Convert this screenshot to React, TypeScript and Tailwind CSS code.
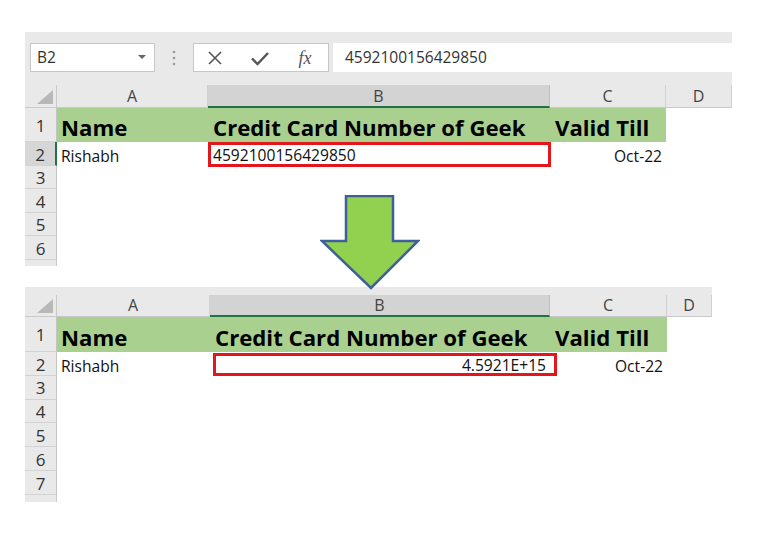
import React from 'react';

const FONT = "font-['Open_Sans',_'Liberation_Sans',_sans-serif]";

type SheetProps = {
  colWidths: number[];
  headerH: number;
  row1H: number;
  rowH: number;
  fullRows: number;
  partialH: number;
  value: string;
  alignRight: boolean;
  selected: boolean;
  boxShift?: boolean;
};

function Sheet({ colWidths, headerH, row1H, rowH, fullRows, partialH, value, alignRight, selected, boxShift }: SheetProps) {
  const [rw, aw, bw, cw, dw] = colWidths;
  const letters = ['A', 'B', 'C', 'D'];
  const widths = [aw, bw, cw, dw];
  const rows = Array.from({ length: fullRows - 2 }, (_, i) => i + 3);

  return (
    <div className="flex flex-col">
      {/* column headers */}
      <div className="flex" style={{ height: headerH }}>
        <div className="relative bg-[#e9e9e9] border-r border-b border-[#c9c9c9]" style={{ width: rw }}>
          <svg className="absolute right-[3px] bottom-[3px]" width="16" height="14" viewBox="0 0 16 14">
            <polygon points="16,0 16,14 0,14" fill="#b8b8b8" />
          </svg>
        </div>
        {letters.map((l, i) => (
          <div
            key={l}
            className={`flex items-center justify-center text-[16px] text-[#444] border-r ${
              l === 'B'
                ? 'bg-[#d3d3d3] border-b-2 border-b-[#217346] border-r-[#bdbdbd]'
                : 'bg-[#e9e9e9] border-b border-b-[#c9c9c9] border-r-[#d0d0d0]'
            }`}
            style={{ width: widths[i] }}
          >
            {l}
          </div>
        ))}
      </div>

      {/* row 1 */}
      <div className="flex" style={{ height: row1H }}>
        <RowHead n={1} w={rw} />
        <div className="flex bg-[#a9d08e] font-bold text-[22.2px] text-black leading-none">
          <div className="flex items-end pb-[3px] pl-[4px]" style={{ width: aw }}>Name</div>
          <div className="flex items-end pb-[3px] pl-[5px] whitespace-nowrap" style={{ width: bw }}>
            Credit Card Number of Geek
          </div>
          <div className="flex items-end pb-[3px] pl-[5px] whitespace-nowrap" style={{ width: cw }}>
            Valid Till
          </div>
        </div>
      </div>

      {/* row 2 */}
      <div className="flex text-[15.6px] text-[#111]" style={{ height: rowH }}>
        <RowHead n={2} w={rw} active={selected} />
        <div className="flex items-end pl-[4px] leading-[20px]" style={{ width: aw }}>Rishabh</div>
        <div className="relative" style={{ width: bw }}>
          <div
            className={`absolute border-[3px] border-[#e3161b] flex items-center pt-[2px] ${
              alignRight ? 'justify-end pr-[8px]' : 'justify-start pl-[2px]'
            } ${boxShift ? 'left-[3px] -right-[7px] top-[1px] bottom-0' : 'left-0 -right-[1px] top-0 bottom-[-1px]'}`}
          >
            {value}
          </div>
        </div>
        <div className="flex items-end justify-end pr-[4px] leading-[20px]" style={{ width: cw }}>Oct-22</div>
      </div>

      {rows.map((n) => (
        <div key={n} className="flex" style={{ height: rowH }}>
          <RowHead n={n} w={rw} />
        </div>
      ))}
      <div className="flex" style={{ height: partialH }}>
        <div className="bg-[#e9e9e9] border-r border-[#c9c9c9]" style={{ width: rw }} />
      </div>
    </div>
  );
}

function RowHead({ n, w, active }: { n: number; w: number; active?: boolean }) {
  return (
    <div
      className={`flex items-center justify-center pt-[2px] text-[17px] text-[#333] border-b border-b-[#d3d3d3] ${
        active ? 'bg-[#d6d6d6] border-r-2 border-r-[#217346]' : 'bg-[#e9e9e9] border-r border-r-[#c4c4c4]'
      }`}
      style={{ width: w }}
    >
      {n}
    </div>
  );
}

export default function App() {
  return (
    <div className={`relative w-[768px] h-[539px] bg-white overflow-hidden ${FONT}`}>
      <div className="pt-[32px] pl-[25px]">
        {/* formula bar */}
        <div className="w-[707px] h-[53px] bg-[#e9e9e9] pt-[11px] flex items-start">
          <div className="ml-[5px] w-[125px] h-[29px] bg-white border border-[#c6c6c6] flex items-center justify-between pl-[6px] pr-[8px] text-[15.5px] text-[#333]">
            <span>B2</span>
            <svg width="8" height="5" viewBox="0 0 8 5">
              <polygon points="0,0 8,0 4,4" fill="#666" />
            </svg>
          </div>
          <div className="w-[38px] h-[29px] flex items-center justify-center">
            <svg width="4" height="16" viewBox="0 0 4 16">
              <circle cx="2" cy="2" r="1.3" fill="#9a9a9a" />
              <circle cx="2" cy="8" r="1.3" fill="#9a9a9a" />
              <circle cx="2" cy="14" r="1.3" fill="#9a9a9a" />
            </svg>
          </div>
          <div className="w-[136px] h-[29px] bg-white border border-[#c6c6c6] flex items-center">
            <div className="w-[42px] flex justify-center">
              <svg width="16" height="16" viewBox="0 0 16 16">
                <path d="M2 2 L14 14 M14 2 L2 14" stroke="#555" strokeWidth="1.6" fill="none" />
              </svg>
            </div>
            <div className="w-[48px] flex justify-center">
              <svg width="20" height="16" viewBox="0 0 20 16">
                <path d="M2 8.5 L7.5 14 L18 3" stroke="#555" strokeWidth="2.4" fill="none" />
              </svg>
            </div>
            <div className="w-[42px] flex justify-center font-['Liberation_Serif',_serif] italic text-[18px] text-[#555] leading-none">
              fx
            </div>
          </div>
          <div className="ml-[4px] flex-1 h-[29px] bg-white flex items-center pl-[12px] text-[15.5px] text-[#333]">
            4592100156429850
          </div>
        </div>

        <Sheet
          colWidths={[32, 151, 342, 116, 66]}
          headerH={23}
          row1H={34}
          rowH={23.6}
          fullRows={6}
          partialH={6}
          value="4592100156429850"
          alignRight={false}
          selected
        />

        <div className="mt-[21px] w-[687px] h-[8px] bg-[#e9e9e9]" />
        <Sheet
          colWidths={[32, 153, 340, 117, 45]}
          headerH={22}
          row1H={35}
          rowH={23.8}
          fullRows={7}
          partialH={7}
          value="4.5921E+15"
          alignRight
          selected={false}
          boxShift
        />
      </div>

      {/* arrow annotation */}
      <svg className="absolute left-[320px] top-[195px]" width="100" height="96" viewBox="0 0 100 96">
        <polygon
          points="26,1 73,1 73,46 98,46 51,93 2,46 26,46"
          fill="#92d050"
          stroke="#3e5f9a"
          strokeWidth="2.5"
          strokeLinejoin="miter"
        />
      </svg>
    </div>
  );
}
